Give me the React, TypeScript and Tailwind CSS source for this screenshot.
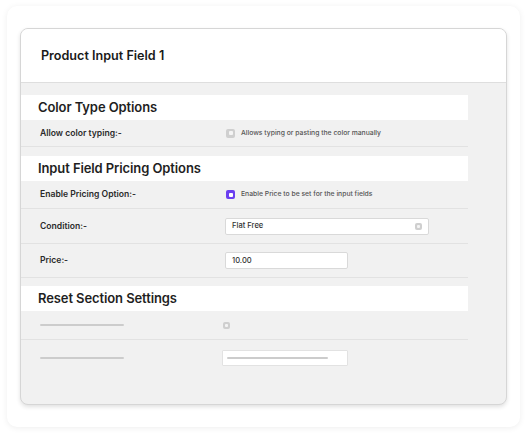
import type { ReactNode } from 'react'

function Band({ title }: { title: string }) {
  return (
    <div className="h-[25px] w-[447px] bg-white flex items-center pl-[17px]">
      <span className="text-[13px] font-semibold text-[#1f1f1f] tracking-[-0.1px]">{title}</span>
    </div>
  )
}

function Row({ label, h, border = true, children }: { label: ReactNode; h: string; border?: boolean; children: ReactNode }) {
  return (
    <div className={`w-[447px] flex items-center ${h} ${border ? 'border-b border-[#e2e2e2]' : ''}`}>
      <div className="w-[201px] pl-[19px] text-[8.6px] font-semibold text-[#2a2a2a]">{label}</div>
      <div className="flex-1 flex items-center">{children}</div>
    </div>
  )
}

function Check({ on = false, small = false }: { on?: boolean; small?: boolean }) {
  if (on) {
    return (
      <div className="w-[9px] h-[9px] rounded-[2px] bg-[#6b3ff0] flex items-center justify-center">
        <div className="w-[4px] h-[4px] bg-white rounded-[1px]" />
      </div>
    )
  }
  return (
    <div className={`${small ? 'w-[7px] h-[7px]' : 'w-[9px] h-[9px]'} rounded-[2px] bg-[#cfcfcf] flex items-center justify-center`}>
      <div className={`${small ? 'w-[3px] h-[3px]' : 'w-[4px] h-[4px]'} bg-[#f4f4f4] rounded-[1px]`} />
    </div>
  )
}

function Desc({ children }: { children: ReactNode }) {
  return <span className="ml-[6px] text-[6.8px] font-medium text-[#555]">{children}</span>
}

export default function App() {
  return (
    <div className="w-[530px] h-[437px] bg-white pt-[6px] pl-[7px]" style={{ fontFamily: 'Inter, "Noto Sans", sans-serif' }}>
      <div className="w-[513px] h-[421px] bg-white rounded-[10px] shadow-[0_1px_6px_rgba(0,0,0,0.07)] pt-[22px] pl-[13px]">
        <div className="w-[487px] h-[377px] rounded-[8px] border border-[#d6d6d6] bg-[#f1f1f1] shadow-[0_2px_4px_rgba(0,0,0,0.12)] overflow-hidden flex flex-col">
          <div className="h-[54px] bg-white border-b border-[#dedede] flex items-center pl-[20px] pt-[1px]">
            <span className="text-[12.6px] font-semibold text-[#1a1a1a]">Product Input Field 1</span>
          </div>

          <div className="pt-[12px] flex flex-col">
            <Band title="Color Type Options" />
            <Row label="Allow color typing:-" h="h-[27px]">
              <div className="ml-[4px] flex items-center">
                <Check />
                <Desc>Allows typing or pasting the color manually</Desc>
              </div>
            </Row>

            <div className="mt-[9px]">
              <Band title="Input Field Pricing Options" />
            </div>
            <Row label="Enable Pricing Option:-" h="h-[28px]">
              <div className="ml-[4px] flex items-center">
                <Check on />
                <Desc>Enable Price to be set for the input fields</Desc>
              </div>
            </Row>
            <Row label="Condition:-" h="h-[35px]">
              <div className="ml-[3px] w-[204px] h-[17px] bg-white border border-[#d9d9d9] rounded-[2px] flex items-center justify-between px-[6px]">
                <span className="text-[7.6px] font-medium text-[#333]">Flat Free</span>
                <Check small />
              </div>
            </Row>
            <Row label="Price:-" h="h-[34px]">
              <div className="ml-[3px] w-[123px] h-[17px] bg-white border border-[#d9d9d9] rounded-[2px] flex items-center px-[6px]">
                <span className="text-[7.6px] font-medium text-[#333]">10.00</span>
              </div>
            </Row>

            <div className="mt-[8px]">
              <Band title="Reset Section Settings" />
            </div>
            <Row label={<div className="w-[84px] h-[2px] rounded bg-[#cccccc]" />} h="h-[29px]">
              <div className="ml-[1px]">
                <Check small />
              </div>
            </Row>
            <Row label={<div className="w-[84px] h-[2px] rounded bg-[#cccccc]" />} h="h-[35px]" border={false}>
              <div className="w-[126px] h-[16px] bg-white border border-[#e2e2e2] rounded-[1px] flex items-center px-[4px]">
                <div className="w-[101px] h-[2px] rounded bg-[#cccccc]" />
              </div>
            </Row>
          </div>
        </div>
      </div>
    </div>
  )
}
